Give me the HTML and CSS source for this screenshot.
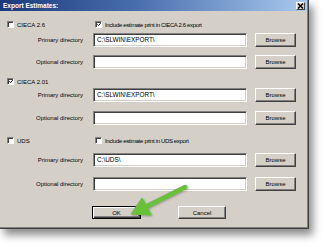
FILE: index.html
```html
<!DOCTYPE html>
<html>
<head>
<meta charset="utf-8">
<link rel="stylesheet" href="styles.css">
</head>
<body>
<div class="dialog">
  <div class="titlebar">
    <span class="title">Export Estimates:</span>
    <span class="close"><svg width="7" height="6" viewBox="0 0 7 6"><path d="M1 0.5 L6 5.5 M6 0.5 L1 5.5" stroke="#000" stroke-width="1.3"/></svg></span>
  </div>
  <div class="body">
    <div class="head s1">
      <label class="check first"><span class="box"></span>CIECA 2.6</label>
      <label class="check include"><span class="box"><svg width="5" height="5" viewBox="0 0 5 5"><path d="M0.5 2.2 L2 3.8 L4.6 0.8" fill="none" stroke="#000" stroke-width="1.2"/></svg></span>Include estimate print in CIECA 2.6 export</label>
    </div>
    <div class="field p1">
      <span class="lbl">Primary directory</span>
      <span class="input">C:\SLWIN\EXPORT\</span>
      <span class="btn">Browse</span>
    </div>
    <div class="field o1">
      <span class="lbl">Optional directory</span>
      <span class="input"></span>
      <span class="btn">Browse</span>
    </div>

    <div class="head s2">
      <label class="check first"><span class="box"><svg width="5" height="5" viewBox="0 0 5 5"><path d="M0.5 2.2 L2 3.8 L4.6 0.8" fill="none" stroke="#000" stroke-width="1.2"/></svg></span>CIECA 2.01</label>
    </div>
    <div class="field p2">
      <span class="lbl">Primary directory</span>
      <span class="input">C:\SLWIN\EXPORT\</span>
      <span class="btn">Browse</span>
    </div>
    <div class="field o2">
      <span class="lbl">Optional directory</span>
      <span class="input"></span>
      <span class="btn">Browse</span>
    </div>

    <div class="head s3">
      <label class="check first"><span class="box"></span>UDS</label>
      <label class="check include"><span class="box"></span>Include estimate print in UDS export</label>
    </div>
    <div class="field p3">
      <span class="lbl">Primary directory</span>
      <span class="input">C:\UDS\</span>
      <span class="btn">Browse</span>
    </div>
    <div class="field o3">
      <span class="lbl">Optional directory</span>
      <span class="input"></span>
      <span class="btn">Browse</span>
    </div>

    <div class="actions">
      <span class="btn ok">OK</span>
      <span class="btn cancel">Cancel</span>
    </div>
  </div>
  <svg class="arrow" width="80" height="50" viewBox="110 180 80 50">
    <g fill="#67c23a" stroke="#67c23a">
      <path d="M185 187 L147 206" stroke-width="4.5" stroke-linecap="round" fill="none"/>
      <path d="M131 214 L142 198 L151 215 Z" stroke-width="1" stroke-linejoin="round"/>
    </g>
  </svg>
</div>
</body>
</html>
```
FILE: styles.css
```css
html, body {
  margin: 0;
  padding: 0;
  background: #ffffff;
}
body {
  width: 326px;
  height: 247px;
  overflow: hidden;
  font-family: "Liberation Sans", Arial, sans-serif;
  font-size: 6px;
  color: #000;
}
.dialog {
  position: relative;
  width: 309px;
  height: 229px;
  background: #d4d0c8;
  border-right: 1px solid #404040;
  border-bottom: 1px solid #404040;
  box-shadow: inset -1px -1px 0 #808080, 4px 6px 8px rgba(0,0,0,0.45);
  box-sizing: border-box;
}
.titlebar {
  height: 11px;
  margin-right: 1px;
  background: linear-gradient(to right, #1b3a7c 0%, #4a6fae 45%, #a9c9ee 100%);
  display: flex;
  align-items: center;
  justify-content: space-between;
  padding: 0 2px 0 3px;
}
.title {
  color: #fff;
  font-weight: bold;
  font-size: 6.5px;
  line-height: 11px;
}
.close {
  width: 9px;
  height: 8px;
  background: #d4d0c8;
  border-top: 1px solid #fff;
  border-left: 1px solid #fff;
  border-right: 1px solid #404040;
  border-bottom: 1px solid #404040;
  box-sizing: border-box;
  display: flex;
  align-items: center;
  justify-content: center;
}
.close svg { display: block; }
.body {
  display: flex;
  flex-direction: column;
}
.head {
  height: 9px;
  display: flex;
  align-items: center;
}
.check {
  display: flex;
  align-items: center;
  gap: 3px;
  white-space: nowrap;
}
.check.first {
  width: 88px;
  padding-left: 7px;
}
.check.include {
  letter-spacing: -0.35px;
}
.box {
  width: 7px;
  height: 7px;
  box-sizing: border-box;
  background: #fff;
  border-top: 1px solid #808080;
  border-left: 1px solid #808080;
  border-right: 1px solid #fff;
  border-bottom: 1px solid #fff;
  box-shadow: inset 1px 1px 0 #404040;
  display: flex;
  align-items: center;
  justify-content: center;
}
.box svg { display: block; margin: 0 0 0 1px; }
.field {
  height: 14px;
  display: flex;
  align-items: center;
}
.lbl {
  width: 93px;
  box-sizing: border-box;
  padding-right: 10px;
  text-align: right;
  white-space: nowrap;
}
.input {
  width: 154px;
  height: 14px;
  box-sizing: border-box;
  background: #fff;
  border-top: 1px solid #808080;
  border-left: 1px solid #808080;
  border-right: 1px solid #fff;
  border-bottom: 1px solid #fff;
  box-shadow: inset 1px 1px 0 #404040, inset -1px -1px 0 #d4d0c8;
  padding-left: 3px;
  font-size: 6.4px;
  line-height: 12px;
  color: #000;
}
.btn {
  width: 41px;
  height: 14px;
  box-sizing: border-box;
  margin-left: 8px;
  background: #d4d0c8;
  border-top: 1px solid #fff;
  border-left: 1px solid #fff;
  border-right: 1px solid #404040;
  border-bottom: 1px solid #404040;
  box-shadow: inset -1px -1px 0 #808080;
  display: flex;
  align-items: center;
  justify-content: center;
  color: #000;
}
.s1 { margin-top: 9px; }
.p1 { margin-top: 4px; }
.o1 { margin-top: 8px; }
.s2 { margin-top: 8px; }
.p2 { margin-top: 2px; }
.o2 { margin-top: 9px; }
.s3 { margin-top: 11px; }
.p3 { margin-top: 8px; }
.o3 { margin-top: 10px; }
.actions {
  margin-top: 15px;
  display: flex;
  padding-left: 92px;
}
.actions .btn {
  height: 13px;
  margin-left: 0;
}
.btn.ok {
  width: 49px;
  border: 1px solid #000;
  box-shadow: inset 1px 1px 0 #fff, inset -1px -1px 0 #404040, inset -2px -2px 0 #808080;
}
.btn.cancel {
  width: 48px;
  margin-left: 37px;
}
.arrow {
  position: absolute;
  left: 110px;
  top: 180px;
  filter: drop-shadow(1px 1px 1px rgba(0,0,0,0.3));
}
```
